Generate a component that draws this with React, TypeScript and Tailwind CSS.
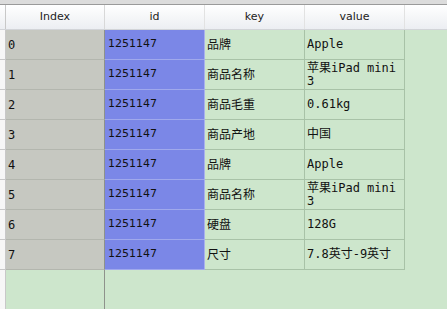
const rows = [
  { key: "品牌", value: "Apple" },
  { key: "商品名称", value: "苹果iPad mini 3" },
  { key: "商品毛重", value: "0.61kg" },
  { key: "商品产地", value: "中国" },
  { key: "品牌", value: "Apple" },
  { key: "商品名称", value: "苹果iPad mini 3" },
  { key: "硬盘", value: "128G" },
  { key: "尺寸", value: "7.8英寸-9英寸" },
]

const mono = "font-['DejaVu_Sans_Mono','Noto_Sans_CJK_SC',monospace]"
const sans = "font-['DejaVu_Sans','Noto_Sans_CJK_SC',sans-serif]"

export default function App() {
  return (
    <div className={`w-[447px] h-[309px] overflow-hidden bg-[#cde6cc] flex flex-col text-[#111] ${sans}`}>
      {/* barra superior */}
      <div className="h-[5px] shrink-0 bg-[#dcdcdc] border-b border-[#9a9a9a]" />

      {/* cabecalho */}
      <div className="h-[25px] shrink-0 flex bg-gradient-to-b from-white to-[#eceef2] border-b border-[#d2d4d8] text-[11px] text-[#222]">
        <div className="w-[6px] border-r border-[#c8c8c8]" />
        <div className="w-[99px] border-r border-[#d8d8d8] flex items-center justify-center">Index</div>
        <div className="w-[100px] border-r border-[#e2e2e2] flex items-center justify-center">id</div>
        <div className="w-[100px] border-r border-[#e2e2e2] flex items-center justify-center">key</div>
        <div className="w-[100px] border-r border-[#e2e2e2] flex items-center justify-center">value</div>
        <div className="flex-1" />
      </div>

      {/* linhas */}
      {rows.map((r, i) => (
        <div key={i} className="h-[30px] shrink-0 flex">
          <div className="w-[6px] bg-[#f7f7f7] border-r border-b border-[#c8c8c8]" />
          <div className={`w-[99px] bg-[#c6c8c1] border-r border-b border-r-[#8e928b] border-b-[#b3b6ae] flex items-center pl-[2px] text-[12px] ${mono}`}>
            {i}
          </div>
          <div className="w-[100px] bg-[#7b87e7] border-r border-b border-r-[#a8b0ec] border-b-[#a0a9ec] flex items-center pl-[3px] text-[11px]">
            1251147
          </div>
          <div className="w-[100px] border-r border-b border-[#a8c2a7] flex items-center pl-[2px] text-[12px]">
            {r.key}
          </div>
          <div className={`w-[100px] border-r border-b border-[#a8c2a7] flex items-center pl-[2px] pr-[2px] text-[12px] leading-[13px] ${mono}`}>
            {r.value}
          </div>
          <div className="flex-1" />
        </div>
      ))}

      {/* area vazia */}
      <div className="flex-1 flex">
        <div className="w-[6px] bg-[#f7f7f7] border-r border-[#c8c8c8]" />
        <div className="w-[99px] border-r border-[#8e928b]" />
        <div className="flex-1" />
      </div>
    </div>
  )
}
